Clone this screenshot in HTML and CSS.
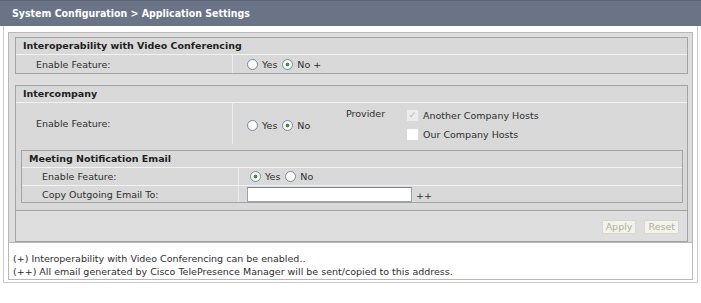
FILE: index.html
```html
<!DOCTYPE html>
<html lang="en">
<head>
    <meta charset="UTF-8">
    <title>Application Settings</title>
    <link rel="stylesheet" href="styles.css">
</head>
<body>
    <div class="titlebar">System Configuration &gt; Application Settings</div>

    <div class="frame">
        <div class="section">
            <div class="panel">
                <div class="box">
                    <div class="box-head">Interoperability with Video Conferencing</div>
                    <div class="row">
                        <div class="label">Enable Feature:</div>
                        <div class="value">
                            <label class="opt"><span class="radio"></span>Yes</label>
                            <label class="opt"><span class="radio checked"></span>No +</label>
                        </div>
                    </div>
                </div>

                <div class="box box-intercompany">
                    <div class="box-head">Intercompany</div>
                    <div class="row row-tall">
                        <div class="label">Enable Feature:</div>
                        <div class="value value-top">
                            <div class="radios">
                                <label class="opt"><span class="radio"></span>Yes</label>
                                <label class="opt"><span class="radio checked"></span>No</label>
                            </div>
                            <div class="provider">Provider</div>
                            <div class="hosts">
                                <div class="host"><span class="check disabled">&#10003;</span>Another Company Hosts</div>
                                <div class="host"><span class="check"></span>Our Company Hosts</div>
                            </div>
                        </div>
                    </div>

                    <div class="box box-nested">
                        <div class="box-head">Meeting Notification Email</div>
                        <div class="row row-short">
                            <div class="label">Enable Feature:</div>
                            <div class="value value-nested">
                                <label class="opt"><span class="radio checked"></span>Yes</label>
                                <label class="opt"><span class="radio"></span>No</label>
                            </div>
                        </div>
                        <div class="row row-short">
                            <div class="label">Copy Outgoing Email To:</div>
                            <div class="value value-input">
                                <input type="text" class="email">
                                <span class="mark">++</span>
                            </div>
                        </div>
                    </div>
                </div>

                <div class="actions">
                    <button class="btn" disabled>Apply</button>
                    <button class="btn" disabled>Reset</button>
                </div>
            </div>

            <div class="notes">
                <p>(+) Interoperability with Video Conferencing can be enabled..</p>
                <p>(++) All email generated by Cisco TelePresence Manager will be sent/copied to this address.</p>
            </div>
        </div>
    </div>
</body>
</html>
```

FILE: styles.css
```css
* {
    box-sizing: border-box;
}
body {
    margin: 0;
    font-family: "DejaVu Sans", Verdana, sans-serif;
    font-size: 9.5px;
    color: #2e2e2e;
    background: #fff;
}
.titlebar {
    height: 26px;
    line-height: 25px;
    background: #6b7386;
    border-top: 1px solid #596277;
    color: #fff;
    font-family: "DejaVu Sans Condensed", "DejaVu Sans", sans-serif;
    font-stretch: condensed;
    font-weight: bold;
    font-size: 10.5px;
    padding-left: 12px;
}
.frame {
    margin: 0 3px;
    border: 1px solid #cacaca;
    border-top: 0;
    padding: 6px 4px 2px;
}
.section {
    border: 1px solid #b8b8b8;
}
.panel {
    background: repeating-conic-gradient(#dbdbdb 0 25%, #e0e0e0 0 50%) 0 0 / 2px 2px;
    padding: 4px 4px 0 6px;
}
.box {
    background: repeating-conic-gradient(#d6d6d6 0 25%, #dbdbdb 0 50%) 0 0 / 2px 2px;
    border: 1px solid #a3a3a3;
}
.box-head {
    height: 17px;
    line-height: 16px;
    font-weight: bold;
    color: #1e1e1e;
    padding-left: 7px;
    border-bottom: 1px solid #f2f2f2;
}
.row {
    display: flex;
    height: 18px;
}
.row + .row {
    border-top: 1px solid #f2f2f2;
}
.row-tall {
    height: 41px;
}
.row-short {
    height: 17px;
}
.label {
    width: 217px;
    padding-left: 20px;
    display: flex;
    align-items: center;
    border-right: 1px solid #ececec;
}
.value {
    display: flex;
    align-items: center;
    padding-left: 14px;
}
.value-top {
    align-items: flex-start;
}
.value-nested {
    padding-left: 11px;
}
.value-input {
    padding-left: 8px;
}
.opt {
    display: flex;
    align-items: center;
    margin-right: 5px;
}
.radio {
    width: 11px;
    height: 11px;
    border: 1px solid #7e8c9c;
    border-radius: 50%;
    background: radial-gradient(circle at 50% 40%, #fff 40%, #e4e6ea);
    margin-right: 4px;
}
.radio.checked {
    background: radial-gradient(circle, #2f9a3a 0 1.6px, #fff 2.2px 45%, #e4e6ea);
}
.radios {
    display: flex;
    width: 99px;
    padding-top: 17px;
}
.provider {
    width: 61px;
    padding-top: 5px;
}
.hosts {
    padding-top: 3px;
}
.host {
    display: flex;
    align-items: center;
    height: 19px;
}
.check {
    width: 11px;
    height: 11px;
    background: #fff;
    margin-right: 5px;
    font-size: 9px;
    line-height: 11px;
    text-align: center;
    color: #b4b4b4;
}
.check.disabled {
    background: #ececec;
}
.box-intercompany {
    margin-top: 11px;
    padding-bottom: 7px;
}
.box-nested {
    margin: 6px 4px 0 5px;
}
.email {
    width: 165px;
    height: 15px;
    border: 1px solid #9aa3ac;
    border-top-color: #7c858f;
    background: #fff;
    margin: 0 4px 0 0;
    padding: 0;
}
.mark {
    padding-top: 2px;
}
.actions {
    height: 31px;
    border: 1px solid #a3a3a3;
    border-top: 0;
    display: flex;
    justify-content: flex-end;
    align-items: center;
    gap: 8px;
    padding: 1px 8px 0 0;
}
.btn {
    height: 14px;
    padding: 0 3px;
    font-family: inherit;
    font-size: 9.5px;
    line-height: 12px;
    background: #f3f3ea;
    color: #aeaea6;
    border: 1px solid #d6d6cc;
    border-radius: 1px;
}
.notes {
    background: #fff;
    padding: 9px 4px 1px;
    border-top: 1px solid #b8b8b8;
}
.notes p {
    margin: 0;
    line-height: 13px;
}
```
